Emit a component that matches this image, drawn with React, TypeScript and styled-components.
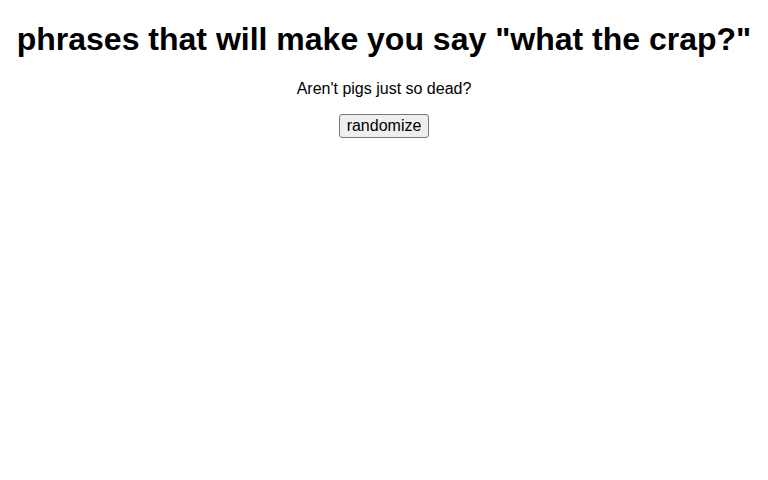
import React, { useState } from "react";
import styled, { createGlobalStyle } from "styled-components";

const Global = createGlobalStyle`
  body {
    margin: 0 8px;
    font-family: "Liberation Sans", Arial, sans-serif;
    background: #fff;
    color: #000;
  }
`;

const Page = styled.div`
  text-align: center;
`;

const Title = styled.h1`
  font-size: 32px;
  font-weight: bold;
  margin: 21.44px 0;
`;

const Phrase = styled.p`
  font-size: 16px;
  margin: 16px 0;
`;

const RandomButton = styled.button`
  font-family: "Liberation Sans", Arial, sans-serif;
  font-size: 16px;
  color: #000;
  background: #efefef;
  border: 1px solid #767676;
  border-radius: 3px;
  padding: 2px 7px;
  cursor: pointer;
`;

const phrases = [
  "Aren't pigs just so dead?",
  "The moon is made of socks.",
  "My toaster has opinions.",
];

export default function App() {
  const [index, setIndex] = useState(0);
  return (
    <Page>
      <Global />
      <Title>phrases that will make you say "what the crap?"</Title>
      <Phrase>{phrases[index]}</Phrase>
      <RandomButton onClick={() => setIndex((index + 1) % phrases.length)}>
        randomize
      </RandomButton>
    </Page>
  );
}
